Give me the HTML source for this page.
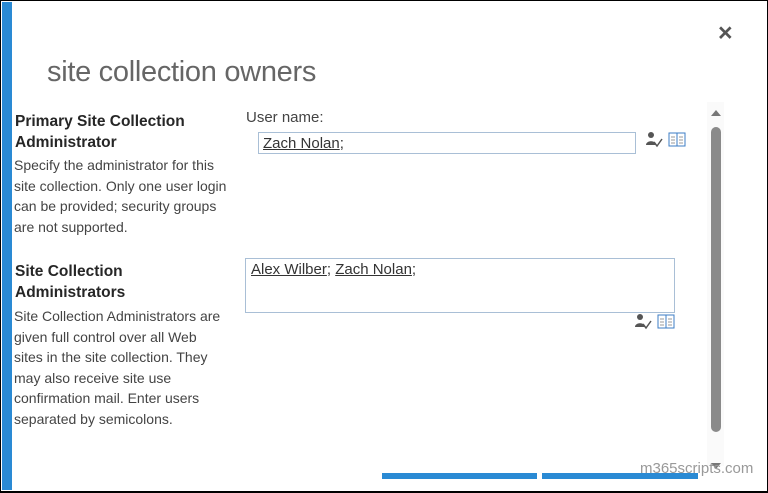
<!DOCTYPE html>
<html><head><style>
body{margin:0;width:768px;height:492px;overflow:hidden;background:#fff;font-family:"Liberation Sans",sans-serif;position:relative}
.a{position:absolute}
.d{color:#444;font-size:14px;line-height:20.5px}
.h{color:#262626;font-size:15.5px;font-weight:bold;line-height:21px}
.u{text-decoration:underline;color:#333}
</style></head><body>
<div class="a" style="left:0;top:0;width:766px;height:490px;border:1px solid #000;border-bottom:2px solid #000"></div>
<div class="a" style="left:2px;top:2px;width:10px;height:488px;background:#2a8ad4"></div>
<div class="a" style="left:718px;top:19px;font-size:25px;color:#555;font-weight:bold">×</div>
<div class="a" style="left:47px;top:56px;font-size:29px;color:#666;letter-spacing:-0.3px">site collection owners</div>
<div class="a h" style="left:15px;top:111px">Primary Site Collection<br>Administrator</div>
<div class="a d" style="left:14px;top:155px">Specify the administrator for this<br>site collection. Only one user login<br>can be provided; security groups<br>are not supported.</div>
<div class="a h" style="left:15px;top:261px">Site Collection<br>Administrators</div>
<div class="a d" style="left:14px;top:306px">Site Collection Administrators are<br>given full control over all Web<br>sites in the site collection. They<br>may also receive site use<br>confirmation mail. Enter users<br>separated by semicolons.</div>
<div class="a" style="left:246px;top:109px;font-size:15px;color:#444">User name:</div>
<div class="a" style="left:258px;top:132px;width:376px;height:20px;border:1px solid #a9bfd6"><div style="position:absolute;left:4px;top:2px;font-size:15px;color:#333"><span class="u">Zach Nolan</span>;</div></div>
<div class="a" style="left:245px;top:258px;width:428px;height:53px;border:1px solid #a9bfd6"><div style="position:absolute;left:5px;top:2px;font-size:15px;color:#333"><span class="u">Alex Wilber</span>; <span class="u">Zach Nolan</span>;</div></div>
<svg class="a" style="left:645px;top:131px" width="45" height="18"><circle cx="6" cy="4" r="3" fill="#555"/><path d="M1 14c0-5 10-5 10 0z" fill="#555"/><path d="M9 11l3 4 5-7" stroke="#555" stroke-width="1.5" fill="none"/><rect x="24" y="2" width="16" height="13" fill="#fff" stroke="#3d7dc4"/><line x1="32" y1="2" x2="32" y2="15" stroke="#3d7dc4"/><path d="M26 6h4M26 9h4M26 12h4M34 6h4M34 9h4M34 12h4" stroke="#999"/></svg>
<svg class="a" style="left:634px;top:313px" width="45" height="18"><circle cx="6" cy="4" r="3" fill="#555"/><path d="M1 14c0-5 10-5 10 0z" fill="#555"/><path d="M9 11l3 4 5-7" stroke="#555" stroke-width="1.5" fill="none"/><rect x="24" y="2" width="16" height="13" fill="#fff" stroke="#3d7dc4"/><line x1="32" y1="2" x2="32" y2="15" stroke="#3d7dc4"/><path d="M26 6h4M26 9h4M26 12h4M34 6h4M34 9h4M34 12h4" stroke="#999"/></svg>
<div class="a" style="left:707px;top:102px;width:17px;height:364px;background:#fafafa"></div>
<div class="a" style="left:711px;top:110px;width:0;height:0;border-left:5px solid transparent;border-right:5px solid transparent;border-bottom:6px solid #777"></div>
<div class="a" style="left:711px;top:127px;width:10px;height:305px;background:#8a8a8a;border-radius:5px"></div>
<div class="a" style="left:711px;top:463px;width:0;height:0;border-left:5px solid transparent;border-right:5px solid transparent;border-top:6px solid #777"></div>
<div class="a" style="left:382px;top:473px;width:155px;height:6px;background:#2a8ad4"></div>
<div class="a" style="left:542px;top:473px;width:156px;height:6px;background:#2a8ad4"></div>
<div class="a" style="left:640px;top:460px;font-size:15px;color:#999">m365scripts.com</div>
</body></html>
